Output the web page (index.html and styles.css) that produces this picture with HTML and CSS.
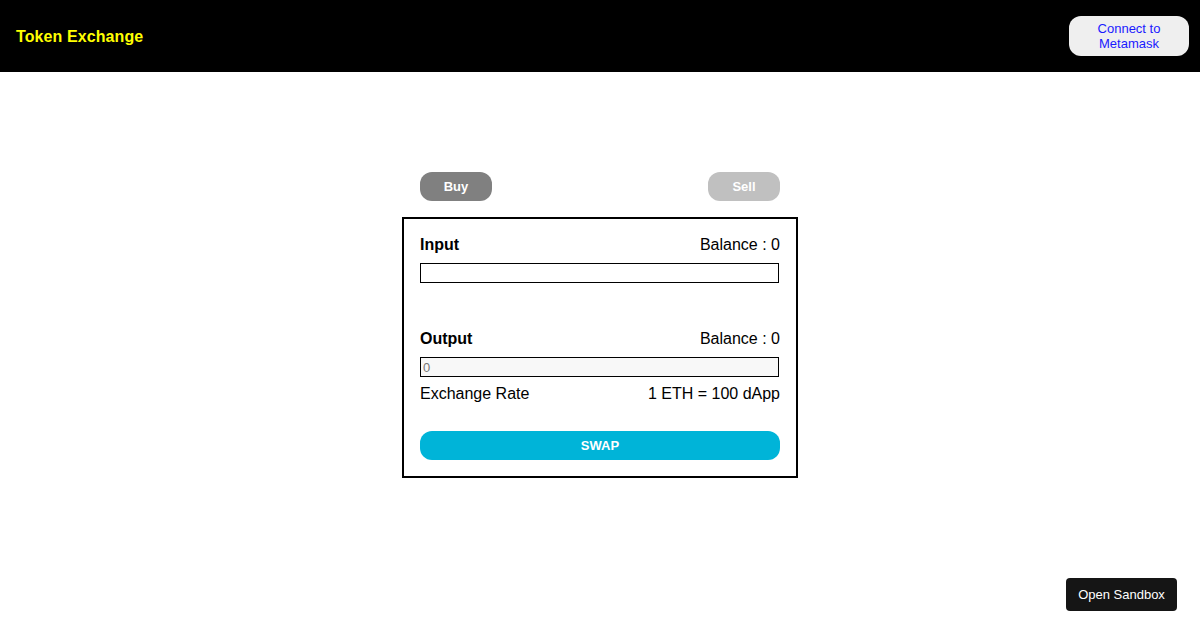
FILE: index.html
```html
<!DOCTYPE html>
<html>
<head>
<meta charset="utf-8">
<link rel="stylesheet" href="styles.css">
</head>
<body>
<header class="topbar">
  <div class="brand">Token Exchange</div>
  <button class="connect">Connect to<br>Metamask</button>
</header>
<main class="main">
  <div class="exchange">
    <div class="tabs">
      <button class="tab tab-buy">Buy</button>
      <button class="tab tab-sell">Sell</button>
    </div>
    <div class="card">
      <div class="row">
        <span class="label">Input</span>
        <span class="balance">Balance : 0</span>
      </div>
      <input class="field" type="text">
      <div class="row row-output">
        <span class="label">Output</span>
        <span class="balance">Balance : 0</span>
      </div>
      <input class="field field-readonly" type="text" placeholder="0" readonly>
      <div class="row row-rate">
        <span>Exchange Rate</span>
        <span>1 ETH = 100 dApp</span>
      </div>
      <button class="swap">SWAP</button>
    </div>
  </div>
</main>
<button class="sandbox">Open Sandbox</button>
</body>
</html>
```
FILE: styles.css
```css
* { box-sizing: border-box; }
html, body { margin: 0; padding: 0; }
body {
  font-family: "Liberation Sans", Arial, sans-serif;
  background: #fff;
  color: #000;
  width: 1200px;
  height: 630px;
  overflow: hidden;
}
button { font-family: "Liberation Sans", Arial, sans-serif; cursor: pointer; }

.topbar {
  height: 72px;
  background: #000;
  display: flex;
  align-items: center;
  justify-content: space-between;
  padding: 0 11px 0 16px;
}
.brand {
  color: #ffff00;
  font-weight: bold;
  font-size: 16px;
  padding-top: 2px;
  letter-spacing: 0.1px;
}
.connect {
  width: 120px;
  height: 40px;
  background: #efefef;
  color: #1a1aff;
  border: none;
  border-radius: 12px;
  font-size: 13px;
  line-height: 15px;
  padding: 0 0 1px 0;
}

.main {
  display: flex;
  justify-content: center;
  padding-top: 100px;
}
.exchange {
  width: 396px;
}
.tabs {
  display: flex;
  justify-content: space-between;
  padding: 0 18px;
  margin-bottom: 16px;
}
.tab {
  width: 72px;
  height: 29px;
  border: none;
  border-radius: 12px;
  color: #fff;
  font-weight: bold;
  font-size: 13px;
  padding: 0 0 1px 0;
}
.tab-buy { background: #808080; }
.tab-sell { background: #c0c0c0; }

.card {
  border: 2px solid #000;
  padding: 16px;
  display: flex;
  flex-direction: column;
}
.row {
  display: flex;
  justify-content: space-between;
  font-size: 16px;
  line-height: 19px;
}
.label { font-weight: bold; }
.field {
  margin-top: 9px;
  height: 20px;
  width: 359px;
  border: 1px solid #000;
  padding: 0 2px;
  font-family: "Liberation Sans", Arial, sans-serif;
  font-size: 13px;
  background: #fff;
  outline: none;
}
.field-readonly { background: #f8f8f8; }
.field::placeholder { color: #777; }
.row-output { margin-top: 46px; }
.row-rate { margin-top: 7px; }
.swap {
  margin-top: 28px;
  height: 29px;
  width: 100%;
  border: none;
  border-radius: 12px;
  background: #00b4d8;
  color: #fff;
  font-weight: bold;
  font-size: 13px;
  padding: 0 0 1px 0;
}

.sandbox {
  position: fixed;
  right: 23px;
  bottom: 19px;
  width: 111px;
  height: 33px;
  background: #151515;
  color: #fff;
  border: none;
  border-radius: 4px;
  font-size: 13px;
  padding: 0;
}
```
